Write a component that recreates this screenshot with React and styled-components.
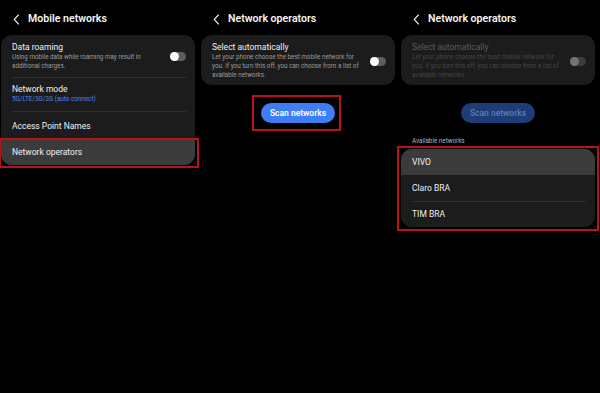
import React from 'react'
import styled, { createGlobalStyle, css } from 'styled-components'

const GlobalStyle = createGlobalStyle`
  html, body {
    margin: 0;
    padding: 0;
    background: #000;
  }
  body {
    font-family: Roboto, "Noto Sans", "Liberation Sans", sans-serif;
    color: #f2f2f2;
  }
`

// red annotation box drawn over an element
const marker = inset => css`
  position: relative;
  &::after {
    content: '';
    position: absolute;
    inset: ${inset};
    border: 2px solid #b8121b;
    pointer-events: none;
  }
`

const Page = styled.div`
  width: 600px;
  height: 393px;
  display: flex;
  background: #000;
  overflow: hidden;
`

const Panel = styled.div`
  width: 200px;
  padding-left: 1px;
  box-sizing: border-box;
  display: flex;
  flex-direction: column;
`

const Header = styled.div`
  height: 35px;
  box-sizing: border-box;
  padding: 12px 0 0 12px;
  display: flex;
  align-items: flex-start;
  gap: 8px;

  svg {
    margin-top: 2px;
  }
`

const Title = styled.div`
  font-size: 10.6px;
  line-height: 14px;
  font-weight: 600;
  color: #f4f4f4;
`

const Card = styled.div`
  width: 194px;
  background: #1c1c1d;
  border-radius: 11px;
  ${p => p.$marked && marker('-3px -4px -4px -4px')}
`

const Row = styled.div`
  display: flex;
  align-items: center;
  box-sizing: border-box;
  padding: ${p => p.$pad || '0 10px 0 11px'};
  min-height: ${p => p.$h || 0}px;
  background: ${p => (p.$active ? '#3b3b3c' : 'transparent')};
  ${p => p.$last && css`
    border-radius: 0 0 11px 11px;
  `}
  ${p => p.$first && css`
    border-radius: 11px 11px 0 0;
  `}
  ${p => p.$marked && marker('-2px -4px -3px -2px')}
`

const Texts = styled.div`
  flex: 1;
  display: flex;
  flex-direction: column;
  max-width: ${p => p.$max || 'none'};
`

const Label = styled.div`
  font-size: 8.5px;
  line-height: 11px;
  color: ${p => (p.$dim ? '#5b5b5b' : '#f0f0f0')};
`

const Sub = styled.div`
  font-size: 6.3px;
  line-height: 9px;
  color: ${p => (p.$blue ? '#4f86ea' : p.$dim ? '#454545' : '#9b9b9b')};
`

const Divider = styled.div`
  height: 1px;
  margin: 0 9px 0 11px;
  background: #303031;
`

const Toggle = styled.div`
  width: 16px;
  height: 9px;
  border-radius: 5px;
  background: ${p => (p.$dim ? '#3c3c3c' : '#5d5d5d')};
  position: relative;
  flex-shrink: 0;
  margin-left: 6px;

  &::before {
    content: '';
    position: absolute;
    left: 0;
    top: 0;
    width: 9px;
    height: 9px;
    border-radius: 50%;
    background: ${p => (p.$dim ? '#737373' : '#fafafa')};
  }
`

const ButtonWrap = styled.div`
  width: 194px;
  display: flex;
  justify-content: center;
  margin-top: 18px;
`

const ScanButton = styled.div`
  width: 74px;
  height: 20px;
  border-radius: 10px;
  display: flex;
  align-items: center;
  justify-content: center;
  font-size: 8.5px;
  font-weight: 600;
  color: ${p => (p.$dim ? '#587ab5' : '#ffffff')};
  background: ${p => (p.$dim ? '#1e3c78' : '#3d7ef5')};
  ${p => p.$marked && marker('-8px -6px -8px -9px')}
`

const SectionLabel = styled.div`
  font-size: 6.3px;
  line-height: 9px;
  color: #b4b4b4;
  padding-left: 11px;
  margin: 14px 0 3px;
`

const Back = () => (
  <svg width="7" height="11" viewBox="0 0 7 11">
    <path d="M5.5 1 L1.2 5.5 L5.5 10" fill="none" stroke="#e8e8e8" strokeWidth="1.1" strokeLinecap="round" strokeLinejoin="round" />
  </svg>
)

const SelectAuto = ({ dim }) => (
  <Card>
    <Row $pad="7px 9px 5px 11px">
      <Texts $max="152px">
        <Label $dim={dim}>Select automatically</Label>
        <Sub $dim={dim}>
          Let your phone choose the best mobile network for you. If you turn this off, you can choose from a list of available networks.
        </Sub>
      </Texts>
      <Toggle $dim={dim} />
    </Row>
  </Card>
)

const App = () => {
  return (
    <Page>
      <GlobalStyle />
      <Panel>
        <Header>
          <Back />
          <Title>Mobile networks</Title>
        </Header>
        <Card>
          <Row $pad="7px 9px 6px 11px">
            <Texts>
              <Label>Data roaming</Label>
              <Sub>Using mobile data while roaming may result in additional charges.</Sub>
            </Texts>
            <Toggle />
          </Row>
          <Divider />
          <Row $pad="6px 9px 7px 11px">
            <Texts>
              <Label>Network mode</Label>
              <Sub $blue>5G/LTE/3G/2G (auto connect)</Sub>
            </Texts>
          </Row>
          <Divider />
          <Row $h={28}>
            <Label>Access Point Names</Label>
          </Row>
          <Row $h={25} $active $last $marked>
            <Label>Network operators</Label>
          </Row>
        </Card>
      </Panel>

      <Panel>
        <Header>
          <Back />
          <Title>Network operators</Title>
        </Header>
        <SelectAuto />
        <ButtonWrap>
          <ScanButton $marked>Scan networks</ScanButton>
        </ButtonWrap>
      </Panel>

      <Panel>
        <Header>
          <Back />
          <Title>Network operators</Title>
        </Header>
        <SelectAuto dim />
        <ButtonWrap>
          <ScanButton $dim>Scan networks</ScanButton>
        </ButtonWrap>
        <SectionLabel>Available networks</SectionLabel>
        <Card $marked>
          <Row $h={26} $active $first>
            <Label>VIVO</Label>
          </Row>
          <Row $h={26}>
            <Label>Claro BRA</Label>
          </Row>
          <Divider />
          <Row $h={25}>
            <Label>TIM BRA</Label>
          </Row>
        </Card>
      </Panel>
    </Page>
  )
}

export default App
